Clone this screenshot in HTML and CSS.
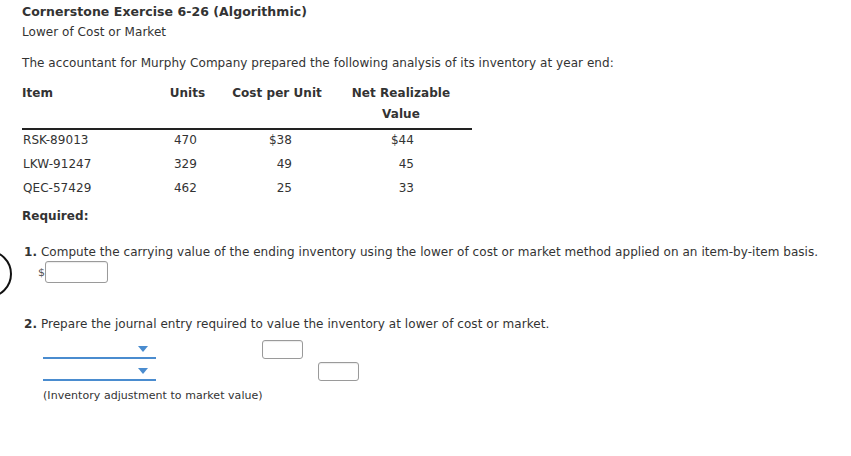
FILE: index.html
```html
<!DOCTYPE html>
<html>
<head>
<meta charset="utf-8">
<link rel="stylesheet" href="styles.css">
</head>
<body>
<div class="page">
  <div class="title">Cornerstone Exercise 6-26 (Algorithmic)</div>
  <div class="subtitle">Lower of Cost or Market</div>
  <p class="intro">The accountant for Murphy Company prepared the following analysis of its inventory at year end:</p>

  <div class="inv">
    <div class="head">
      <div class="h h-item">Item</div>
      <div class="h h-units">Units</div>
      <div class="h h-cost">Cost per Unit</div>
      <div class="h h-nrv">Net Realizable<br>Value</div>
    </div>
    <div class="row">
      <div class="c c-item">RSK-89013</div>
      <div class="c c-units">470</div>
      <div class="c c-cost">$38</div>
      <div class="c c-nrv">$44</div>
    </div>
    <div class="row">
      <div class="c c-item">LKW-91247</div>
      <div class="c c-units">329</div>
      <div class="c c-cost">49</div>
      <div class="c c-nrv">45</div>
    </div>
    <div class="row">
      <div class="c c-item">QEC-57429</div>
      <div class="c c-units">462</div>
      <div class="c c-cost">25</div>
      <div class="c c-nrv">33</div>
    </div>
  </div>

  <div class="required">Required:</div>

  <div class="q q1"><b>1.</b> Compute the carrying value of the ending inventory using the lower of cost or market method applied on an item-by-item basis.</div>
  <div class="answer1">
    <span class="dollar">$</span><span class="box box-wide"></span>
  </div>

  <div class="q q2"><b>2.</b> Prepare the journal entry required to value the inventory at lower of cost or market.</div>
  <div class="journal">
    <div class="jrow">
      <div class="select"><span class="caret"></span></div>
      <span class="box box-debit"></span>
    </div>
    <div class="jrow">
      <div class="select"><span class="caret"></span></div>
      <span class="box box-credit"></span>
    </div>
    <div class="note">(Inventory adjustment to market value)</div>
  </div>
</div>
<div class="ring"></div>
</body>
</html>
```
FILE: styles.css
```css
html, body {
  margin: 0;
  padding: 0;
  background: #fff;
}
body {
  font-family: "DejaVu Sans", Verdana, sans-serif;
  font-size: 12px;
  letter-spacing: 0.05px;
  color: #333;
  position: relative;
  overflow: hidden;
  width: 851px;
  height: 456px;
}
.page {
  padding: 4px 0 0 22px;
}
.title {
  font-weight: bold;
  font-size: 12.5px;
  line-height: 16px;
}
.subtitle {
  margin-top: 4px;
  line-height: 16px;
}
.intro {
  margin: 15px 0 0 0;
  line-height: 16px;
}
.inv {
  margin-top: 12px;
  width: 450px;
}
.head, .row {
  display: grid;
  grid-template-columns: 138px 55px 124px 133px;
}
.head {
  border-bottom: 2px solid #222;
  padding-bottom: 3px;
}
.h {
  font-weight: bold;
  line-height: 21px;
  text-align: center;
}
.h-item { text-align: left; }
.h-nrv { padding-right: 9px; }
.row {
  height: 24px;
  line-height: 24px;
}
.head + .row { margin-top: -2px; }
.c { text-align: right; }
.c-item { text-align: left; padding-left: 1px; }
.c-units { padding-right: 18px; }
.c-cost { padding-right: 47px; }
.c-nrv { padding-right: 58px; }

.required {
  font-weight: bold;
  margin-top: 6px;
  line-height: 20px;
}
.q {
  line-height: 16px;
  padding-left: 2px;
}
.q b { font-weight: bold; }
.q1 { margin-top: 18px; }
.answer1 {
  display: flex;
  align-items: center;
  margin-top: 0;
  padding-left: 16px;
  height: 24px;
}
.dollar {
  font-size: 11px;
  color: #555;
}
.box {
  display: inline-block;
  box-sizing: border-box;
  border: 1px solid #9a9a9a;
  border-radius: 3px;
  background: #fff;
  box-shadow: inset 0 1px 1px rgba(0,0,0,0.08);
}
.box-wide { width: 63px; height: 22px; }
.q2 { margin-top: 32px; }
.journal {
  margin-top: 10px;
  padding-left: 21px;
}
.jrow {
  display: flex;
  align-items: flex-start;
  height: 22px;
}
.select {
  position: relative;
  width: 113px;
  height: 15px;
  border-bottom: 2px solid #4a8ccf;
}
.caret {
  position: absolute;
  right: 8px;
  top: 4px;
  width: 0;
  height: 0;
  border-left: 5px solid transparent;
  border-right: 5px solid transparent;
  border-top: 6px solid #4a8ccf;
}
.box-debit { width: 41px; height: 19px; margin-left: 106px; margin-top: -2px; }
.box-credit { width: 41px; height: 19px; margin-left: 162px; margin-top: -2px; }
.note {
  font-size: 11px;
  line-height: 14px;
  margin-top: 3px;
}
.ring {
  position: absolute;
  left: -36px;
  top: 250px;
  width: 44px;
  height: 44px;
  border: 2px solid #111;
  border-radius: 50%;
}
```
